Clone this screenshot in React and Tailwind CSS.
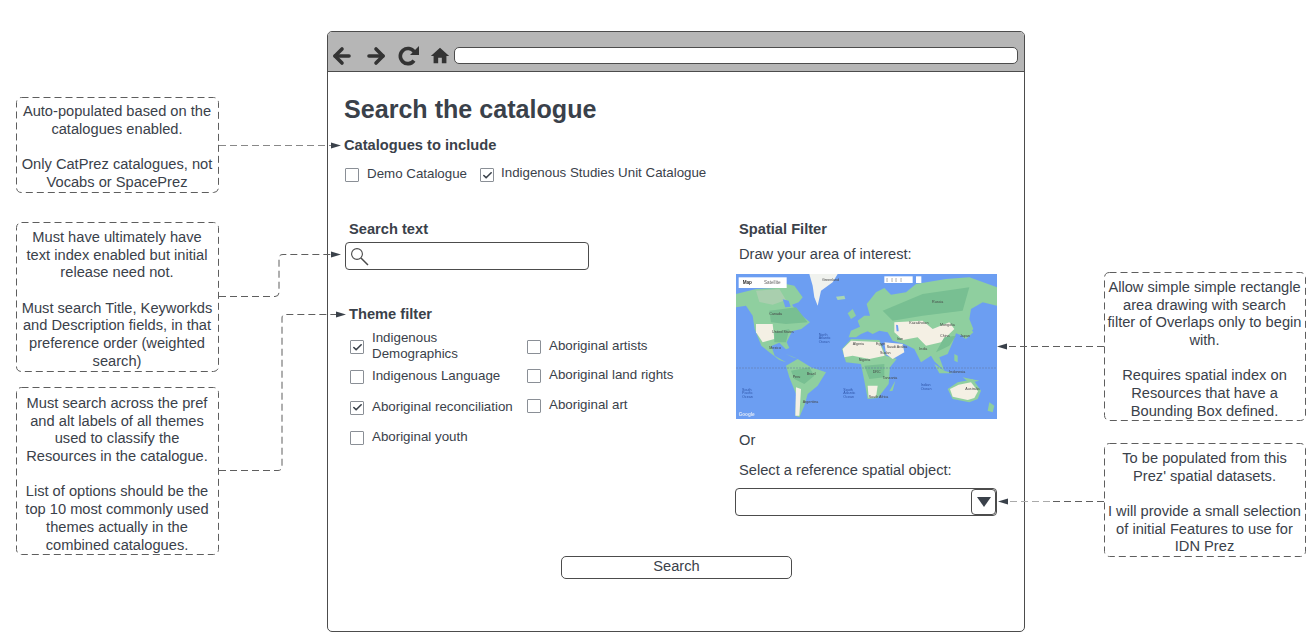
import { ArrowLeft, ArrowRight, Check } from "lucide-react";
import { MdHome } from "react-icons/md";

const notes = [
  { x: 16, y: 97, w: 202, h: 95, pt: "pt-[6px]", lines: ["Auto-populated based on the", "catalogues enabled.", "", "Only CatPrez catalogues, not", "Vocabs or SpacePrez"] },
  { x: 16, y: 222, w: 202, h: 149, pt: "pt-[7px]", lines: ["Must have ultimately have", "text index enabled but initial", "release need not.", "", "Must search Title, Keyworkds", "and Description fields, in that", "preference order (weighted", "search)"] },
  { x: 16, y: 387, w: 202, h: 167, pt: "pt-[8px]", lines: ["Must search across the pref", "and alt labels of all themes", "used to classify the", "Resources in the catalogue.", "", "List of options should be the", "top 10 most commonly used", "themes actually in the", "combined catalogues."] },
  { x: 1104, y: 272, w: 201, h: 148, pt: "pt-[7px]", lines: ["Allow simple simple rectangle", "area drawing with search", "filter of Overlaps only to begin", "with.", "", "Requires spatial index on", "Resources that have a", "Bounding Box defined."] },
  { x: 1104, y: 443, w: 201, h: 113, pt: "pt-[7px]", lines: ["To be populated from this", "Prez' spatial datasets.", "", "I will provide a small selection", "of initial Features to use for", "IDN Prez"] },
];

const themesLeft = [
  { label: "Indigenous Demographics", checked: true, h: "h-[30px]", w: "w-[110px]" },
  { label: "Indigenous Language", h: "h-[30px]" },
  { label: "Aboriginal reconciliation", checked: true, h: "h-[31px]" },
  { label: "Aboriginal youth", h: "h-[29px]" },
];
const themesRight = ["Aboriginal artists", "Aboriginal land rights", "Aboriginal art"];

const mapLabels = [
  ["Greenland", 258, 20], ["Canada", 100, 124], ["United States", 108, 177], ["Mexico", 100, 224], ["Brazil", 212, 304],
  ["Peru", 170, 312], ["Argentina", 200, 388], ["Algeria", 350, 212], ["Nigeria", 368, 262], ["Egypt", 420, 214],
  ["Russia", 588, 88], ["Kazakhstan", 520, 150], ["Mongolia", 612, 156], ["China", 612, 188], ["India", 550, 228],
  ["Iran", 482, 198], ["Saudi Arabia", 452, 222], ["Indonesia", 640, 297], ["Australia", 688, 349], ["Japan", 672, 188],
  ["South Africa", 398, 372], ["Sudan", 432, 240], ["DRC", 410, 298], ["Tanzania", 440, 314],
];
const oceanLabels = [
  ["North", 248, 185], ["Atlantic", 248, 195], ["Ocean", 248, 206],
  ["South", 322, 350], ["Atlantic", 322, 360], ["Ocean", 322, 372],
  ["Indian", 554, 336], ["Ocean", 554, 348],
  ["South", 18, 350], ["Pacific", 18, 360], ["Ocean", 18, 372],
];

function Box({ checked }) {
  return (
    <span className="flex h-[14px] w-[14px] shrink-0 items-center justify-center rounded-[1px] border border-[#8a8f96] bg-white">
      {checked && <Check size={11} strokeWidth={3.5} className="text-[#3a414a]" />}
    </span>
  );
}

function WorldMap() {
  return (
    <svg viewBox="0 0 783 435" className="block h-[145px] w-[261px]">
      <defs>
        <filter id="soft"><feGaussianBlur stdDeviation="2.2" /></filter>
        <filter id="softer"><feGaussianBlur stdDeviation="1.3" /></filter>
      </defs>
      <rect width="783" height="435" fill="#6c9ef2" />
      <g filter="url(#soft)">
        {/* americas */}
        <path fill="#8fcf9f" d="M0 60 60 45 120 42 150 30 175 35 200 70 188 85 168 92 182 112 222 145 196 165 168 172 152 205 160 222 150 226 130 206 106 216 116 245 150 265 130 258 100 235 76 215 56 165 50 125 30 95 0 100Z" />
        <path fill="#a9cfae" d="M60 50 130 45 150 78 110 92 70 84Z" />
        <path fill="#6c9ef2" d="M140 76 158 80 164 98 148 100Z" />
        <path fill="#8fcf9f" d="M150 275 185 255 225 280 270 295 245 335 215 360 205 395 190 430 178 425 180 360 160 310Z" />
        <path fill="#8fcf9f" d="M150 240 185 254 170 250Z" />
        <path fill="#f0f2ee" d="M220 0 305 0 290 25 255 50 245 95 235 70 230 35Z" />
        <path fill="#a9d6b2" d="M300 68 325 65 328 75 305 78Z" />
        {/* eurasia */}
        <path fill="#8fcf9f" d="M338 190 345 170 372 158 365 140 385 125 402 125 392 90 420 55 445 42 465 62 510 55 540 30 630 15 700 10 783 40 783 95 740 85 705 105 700 135 712 165 690 190 660 178 650 205 635 240 610 250 625 290 595 262 585 245 555 265 535 225 505 210 470 200 455 175 430 170 410 180 395 172 375 180 360 190Z" />
        <path fill="#8fcf9f" d="M335 118 350 105 360 125 345 135Z M700 160 712 175 690 195 680 190Z M595 270 625 290 650 298 610 298Z M655 240 665 245 665 265 655 260Z M680 310 730 320 700 326Z M760 385 775 395 770 415 755 410Z M460 352 478 320 470 350Z" />
        {/* africa and australia */}
        <path fill="#8fcf9f" d="M318 225 345 195 430 198 450 245 482 255 462 280 458 330 425 372 395 375 385 320 375 270 330 265Z" />
        <path fill="#8fcf9f" d="M635 345 665 325 690 320 710 315 735 350 725 375 700 385 650 375Z" />
        {/* deserts */}
        <path fill="#f4f0e4" d="M320 225 345 200 430 204 446 245 400 255 350 245 325 250Z" />
        <path fill="#f4f0e4" d="M445 205 500 210 505 235 470 255 450 240Z" />
        <path fill="#f4f0e4" d="M475 145 560 140 590 165 640 145 655 165 615 205 570 215 545 190 500 198 475 175Z" />
        <path fill="#f4f0e4" d="M60 150 110 150 115 195 80 205 60 175Z" />
        <path fill="#f4f0e4" d="M180 340 195 345 190 425 178 425Z" />
        <path fill="#f4f0e4" d="M395 335 425 335 420 370 398 372Z" />
        <path fill="#f4f0e4" d="M642 345 668 332 705 325 726 352 715 372 695 378 650 368Z" />
        <path fill="#6c9ef2" d="M480 152 486 154 488 172 482 172Z" />
        {/* forests */}
        <path fill="#78bf92" d="M165 290 220 280 235 305 205 330 175 315Z M385 275 445 270 445 310 400 315Z M440 110 560 60 700 40 680 110 560 125 470 140Z M100 110 180 100 215 145 150 150 105 145Z M115 175 160 165 150 205 115 205Z M600 235 640 215 660 185 625 190Z" />
      </g>
      <g filter="url(#softer)">
        {mapLabels.map(([t, x, y]) => (
          <text key={t} x={x} y={y} fontSize="11" fill="#444">{t}</text>
        ))}
        {oceanLabels.map(([t, x, y], i) => (
          <text key={i} x={x} y={y} fontSize="11" fill="#2f55a8">{t}</text>
        ))}
        <rect x="8" y="10" width="144" height="32" fill="#fff" />
        <text x="20" y="31" fontSize="14" fontWeight="700" fill="#333">Map</text>
        <text x="84" y="31" fontSize="14" fill="#666">Satellite</text>
        <rect x="445" y="7" width="85" height="20" fill="#fff" />
        <rect x="540" y="7" width="16" height="20" fill="#fff" />
        <text x="450" y="21" fontSize="13" letterSpacing="8" fill="#666">▯▯▯▯</text>
        <text x="8" y="425" fontSize="14" fontWeight="700" fill="#dfe8f7">Google</text>
      </g>
      <line x1="0" y1="282" x2="783" y2="282" stroke="#63709a" strokeWidth="1.5" strokeDasharray="6 3" />
    </svg>
  );
}

export default function App() {
  return (
    <div className="relative h-[642px] w-[1316px] overflow-hidden bg-white font-['Liberation_Sans',Arial,sans-serif] text-[#3a414a]">
      {/* browser window */}
      <div className="absolute left-[327px] top-[31px] flex h-[601px] w-[698px] flex-col rounded-[5px] border border-[#4c4c4c] bg-white">
        <div className="flex h-[40px] items-center rounded-t-[4px] border-b border-[#4c4c4c] bg-[#b6b6b6] pl-[2px] pt-[8px] text-[#333]">
          <ArrowLeft size={24} strokeWidth={3.6} />
          <ArrowRight size={24} strokeWidth={3.6} className="ml-[10px]" />
          <svg width="21" height="21" viewBox="0 0 21 21" className="ml-[10px]">
            <path d="M16.2 6.8A7.6 7.6 0 1 0 16 15.6" fill="none" stroke="#333" strokeWidth="3.6" />
            <path d="M21 1V10H12Z" fill="#333" />
          </svg>
          <MdHome size={22} className="ml-[10px]" />
          <div className="ml-[3px] h-[17px] w-[564px] rounded-[5px] border border-[#4c4c4c] bg-white" />
        </div>

        <div className="flex flex-1 flex-col pl-[16px] pt-[21px]">
          <h1 className="h-[32px] text-[25.1px] font-bold leading-[32px]">Search the catalogue</h1>
          <h2 className="mt-[10px] h-[20px] text-[14.67px] font-bold leading-[20px]">Catalogues to include</h2>
          <div className="ml-[1px] mt-[10px] flex h-[20px] items-center text-[13.33px]">
            <Box />
            <span className="ml-[8px] -translate-y-[1px]">Demo Catalogue</span>
            <span className="ml-[13px]"><Box checked /></span>
            <span className="ml-[7px] -translate-y-[2px]">Indigenous Studies Unit Catalogue</span>
          </div>

          <div className="mt-[34px] flex">
            {/* left column */}
            <div className="w-[392px]">
              <h2 className="h-[20px] pl-[5px] text-[14.67px] font-bold leading-[20px]">Search text</h2>
              <div className="ml-[1px] mt-[3px] h-[28px] w-[244px] rounded-[4px] border border-[#4c4c4c] pl-[5px] pt-[5px]">
                <svg width="18" height="18" viewBox="0 0 18 18" fill="none" stroke="#4a4a4a" strokeWidth="1.1">
                  <circle cx="6" cy="6" r="5.4" />
                  <path d="M10 10 17 17" strokeWidth="1.5" />
                </svg>
              </div>
              <h2 className="mt-[34px] h-[20px] pl-[5px] text-[14.67px] font-bold leading-[20px]">Theme filter</h2>
              <div className="ml-[6px] mt-[8px] flex text-[13.33px] leading-[16px]">
                <div className="w-[177px]">
                  {themesLeft.map((t) => (
                    <div key={t.label} className={"flex items-center gap-[8px] " + t.h}>
                      <Box checked={t.checked} />
                      <span className={"-translate-y-[1px] " + (t.w || "whitespace-nowrap")}>{t.label}</span>
                    </div>
                  ))}
                </div>
                <div>
                  {themesRight.map((t) => (
                    <div key={t} className="flex h-[29.5px] items-center gap-[8px]">
                      <Box />
                      <span className="-translate-y-[1px] whitespace-nowrap">{t}</span>
                    </div>
                  ))}
                </div>
              </div>
            </div>

            {/* right column */}
            <div className="w-[262px]">
              <h2 className="h-[20px] pl-[3px] text-[14.67px] font-bold leading-[20px]">Spatial Filter</h2>
              <p className="mt-[5px] h-[20px] pl-[3px] text-[14.67px] leading-[20px]">Draw your area of interest:</p>
              <div className="mt-[10px]"><WorldMap /></div>
              <p className="mt-[11px] h-[20px] pl-[3px] text-[14.67px] leading-[20px]">Or</p>
              <p className="mt-[10px] h-[20px] pl-[3px] text-[14.67px] leading-[20px]">Select a reference spatial object:</p>
              <div className="-ml-[1px] mt-[8px] flex h-[28px] w-[262px] items-center justify-end rounded-[4px] border border-[#4c4c4c]">
                <div className="flex h-[26px] w-[25px] items-center justify-center rounded-[4px] border border-[#4c4c4c]">
                  <div className="h-0 w-0 border-x-[7px] border-t-[10px] border-x-transparent border-t-[#3a414a]" />
                </div>
              </div>
            </div>
          </div>

          <div className="ml-[217px] mt-[40px] flex h-[23px] w-[231px] items-center justify-center rounded-[5px] border border-[#4c4c4c] pb-[3px] text-[14.67px]">Search</div>
        </div>
      </div>

      {notes.map((n, i) => (
        <div
          key={i}
          style={{ left: n.x, top: n.y, width: n.w, height: n.h }}
          className={"absolute text-center text-[14.67px] leading-[17.7px] " + n.pt}
        >
          {n.lines.map((l, j) => (
            <div key={j} className="h-[17.7px] whitespace-nowrap">{l}</div>
          ))}
        </div>
      ))}

      {/* connectors and dashed note outlines */}
      <svg width="1316" height="642" className="pointer-events-none absolute left-0 top-0">
        <g fill="none" stroke="#5e5e5e" strokeDasharray="7 4">
          {notes.map((n, i) => (
            <rect key={i} x={n.x + 0.5} y={n.y + 0.5} width={n.w} height={n.h} rx="5" />
          ))}
          <path d="M219 145.5H331" stroke="#888" />
          <path d="M219 296.5H275Q279 296.5 279 292V258Q279 254.5 283 254.5H331" />
          <path d="M219 470.5H278Q282 470.5 282 466V318Q282 314.5 286 314.5H336" />
          <path d="M1104 346.5H1006" />
          <path d="M1104 501.5H1050" />
          <path d="M1050 501.5H1006" stroke="#aaa" />
        </g>
        <g fill="#3a414a">
          <path d="M341 145.5 331 142.5V148.5Z" />
          <path d="M341 254.5 331 251.5V257.5Z" />
          <path d="M346 314.5 336 311.5V317.5Z" />
          <path d="M997 346.5 1007 343.5V349.5Z" />
          <path d="M998 501.5 1008 498.5V504.5Z" />
        </g>
      </svg>
    </div>
  );
}
